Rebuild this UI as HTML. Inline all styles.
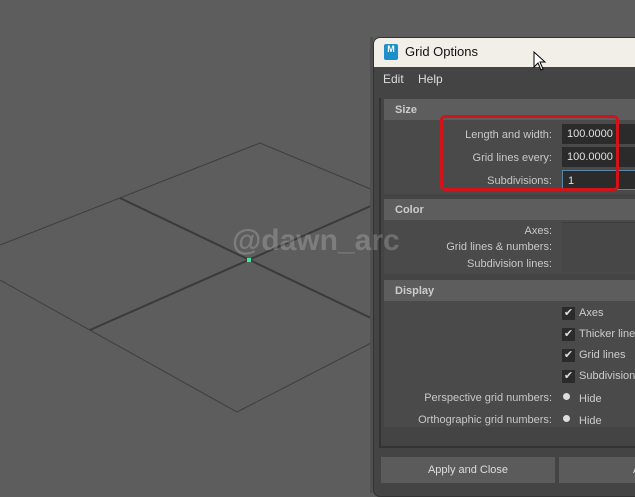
<!DOCTYPE html>
<html><head><meta charset="utf-8"><style>
*{margin:0;padding:0;box-sizing:border-box}
body{width:635px;height:493px;overflow:hidden;background:#5d5d5d;font-family:"Liberation Sans",sans-serif;font-size:11px;color:#d0d0d0;position:relative}
.abs{position:absolute}
.lbl{position:absolute;right:92px;text-align:right;color:#c8c8c8;white-space:nowrap}
.inp{position:absolute;left:188px;width:80px;height:20px;background:#2b2b2b;color:#e0e0e0;padding:4px 0 0 5px}
.hdr{position:absolute;left:10px;width:260px;height:21px;background:#5d5d5d;font-weight:bold;padding:5px 0 0 11px;color:#ccc}
.pan{position:absolute;left:10px;width:260px;background:#4a4a4a}
.cb{position:absolute;left:188px;width:13px;height:13px;background:#2b2b2b;color:#ddd;font-size:11px;line-height:13px;text-align:center}
.ct{position:absolute;left:205px;color:#ccc;white-space:nowrap}
.rd{position:absolute;left:189px;width:7px;height:7px;border-radius:50%;background:#ddd}
</style></head><body>
<svg class="abs" style="left:0;top:0" width="380" height="493">
<g stroke="#3e3e3e" fill="none" stroke-width="1">
<path d="M0 245 L260 143 L373 190"/>
<path d="M0 280 L237 412 L373 342"/>
</g>
<g stroke="#3a3a3a" fill="none" stroke-width="2">
<path d="M120 198 L373 319"/>
<path d="M90 330 L373 205"/>
</g>
<rect x="247" y="258" width="4" height="4" fill="#3fe89a"/>
</svg>
<div class="abs" style="left:370px;top:37px;width:3px;height:456px;background:#505050"></div>
<div class="abs" style="left:373px;top:37px;width:270px;height:460px;background:#444;border-radius:7px 0 0 7px;border:1px solid #333;overflow:hidden">
 <div class="abs" style="left:0;top:0;width:270px;height:29px;background:#f2efe8"></div>
 <div class="abs" style="left:10px;top:6px;width:14px;height:16px;background:#1e8fc9;border-radius:2px;color:#fff;font-size:9px;font-weight:bold;text-align:center;line-height:11px">M</div>
 <div class="abs" style="left:31px;top:6px;color:#111;font-size:13px">Grid Options</div>
 <div class="abs" style="left:9px;top:34px;color:#ddd;font-size:12px">Edit</div>
 <div class="abs" style="left:44px;top:34px;color:#ddd;font-size:12px">Help</div>
 <div class="abs" style="left:5px;top:60px;width:270px;height:350px;border-left:2px solid #333;border-bottom:2px solid #333"></div>
 <div class="abs" style="left:0;top:0;width:270px;height:420px">
  <div class="hdr" style="top:61px">Size</div>
  <div class="pan" style="top:82px;height:74px"></div>
  <div class="lbl" style="top:91px">Length and width:</div><div class="inp" style="top:86px">100.0000</div>
  <div class="lbl" style="top:114px">Grid lines every:</div><div class="inp" style="top:109px">100.0000</div>
  <div class="lbl" style="top:137px">Subdivisions:</div><div class="inp" style="top:132px;border:1px solid #5a87a8">1</div>
  <div class="hdr" style="top:161px">Color</div>
  <div class="pan" style="top:182px;height:54px"></div>
  <div class="abs" style="left:188px;top:184px;width:82px;height:50px;background:#474747;border-top:1px solid #3e3e3e"></div>
  <div class="lbl" style="top:187px">Axes:</div>
  <div class="lbl" style="top:203px">Grid lines &amp; numbers:</div>
  <div class="lbl" style="top:220px">Subdivision lines:</div>
  <div class="hdr" style="top:242px">Display</div>
  <div class="pan" style="top:263px;height:126px"></div>
  <div class="cb" style="top:269px">✔</div><div class="ct" style="top:269px">Axes</div>
  <div class="cb" style="top:290px">✔</div><div class="ct" style="top:290px">Thicker lines</div>
  <div class="cb" style="top:311px">✔</div><div class="ct" style="top:311px">Grid lines</div>
  <div class="cb" style="top:332px">✔</div><div class="ct" style="top:332px">Subdivisions</div>
  <div class="lbl" style="top:354px">Perspective grid numbers:</div><div class="rd" style="top:355px"></div><div class="ct" style="top:355px">Hide</div>
  <div class="lbl" style="top:376px">Orthographic grid numbers:</div><div class="rd" style="top:377px"></div><div class="ct" style="top:377px">Hide</div>
 </div>
 <div class="abs" style="left:7px;top:419px;width:174px;height:26px;background:#5b5b5b;text-align:center;padding-top:7px;color:#ddd">Apply and Close</div>
 <div class="abs" style="left:185px;top:419px;width:90px;height:26px;background:#5b5b5b;padding:7px 0 0 74px;color:#ddd">A</div>
</div>
<div class="abs" style="left:232px;top:224px;font-size:30px;font-weight:bold;color:rgba(255,255,255,0.2);white-space:nowrap">@dawn_arc</div>
<div class="abs" style="left:440px;top:115px;width:179px;height:76px;border:3px solid #d0141a;border-radius:5px"></div>
<svg class="abs" style="left:533px;top:51px" width="14" height="22"><path d="M1 1 L1 16 L5 12 L8 19 L10 18 L7 11 L12 11 Z" fill="#fff" stroke="#000" stroke-width="1"/></svg>
</body></html>
